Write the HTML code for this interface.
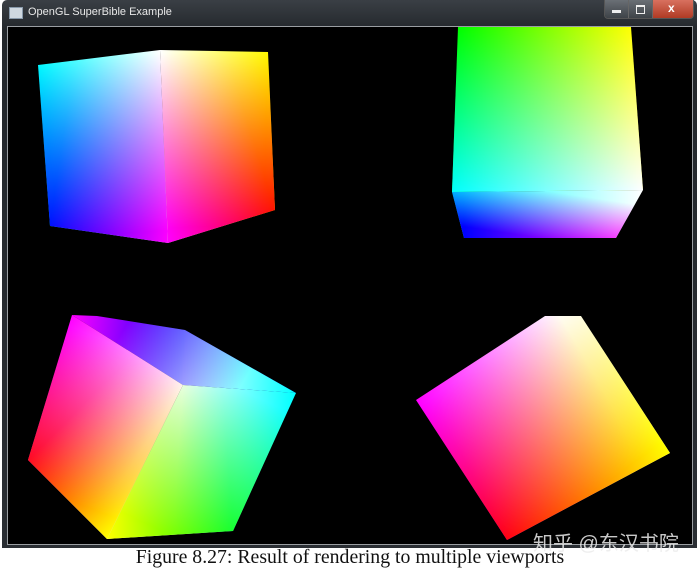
<!DOCTYPE html>
<html><head><meta charset="utf-8"><style>
html,body{margin:0;padding:0;background:#fff;width:700px;height:572px;overflow:hidden}
.win{position:absolute;left:2px;top:0;width:695px;height:548px;background:linear-gradient(#3a3f45,#23272b 30px,#2a2e33);border-radius:5px 5px 0 0}
.title{position:absolute;left:28px;top:6px;font:11px "Liberation Sans",sans-serif;color:#e8e8e8;}
.ico{position:absolute;left:9px;top:7px;width:12px;height:10px;background:#cfd8e0;border:1px solid #8899aa}
.canvas{position:absolute;left:8px;top:27px;width:684px;height:517px;background:#000;outline:1px solid #9a9ea2}
.btns{position:absolute;left:604px;top:0;height:18px;width:88px;border:1px solid #555;border-top:0;border-radius:0 0 4px 4px;overflow:hidden;display:flex}
.b{height:18px;background:linear-gradient(#6a6f75,#3e4348);border-right:1px solid #666;position:relative}
.b1{width:23px}.b2{width:23px}.b3{flex:1;background:linear-gradient(#d8705f,#b03a24);border:0}
.cap{position:absolute;left:0;width:700px;top:546px;text-align:center;font:19.8px "Liberation Serif",serif;color:#111}
.wm{position:absolute;left:533px;top:527px;font:20px "Liberation Sans","Noto Sans CJK SC",sans-serif;color:rgba(235,235,235,.85)}
svg{position:absolute;left:0;top:0}
</style></head><body>
<div class="win"></div>
<div class="ico"></div>
<div class="title">OpenGL SuperBible Example</div>
<div class="btns"><div class="b b1"><div style="position:absolute;left:7px;top:10px;width:9px;height:3px;background:#eee"></div></div><div class="b b2"><div style="position:absolute;left:7px;top:5px;width:7px;height:6px;border:1px solid #eee;border-top-width:2px"></div></div><div class="b b3"><div style="position:absolute;left:15px;top:1px;color:#fff;font:bold 12px 'Liberation Sans',sans-serif">x</div></div></div>
<div class="canvas"></div>
<svg width="700" height="572" viewBox="0 0 700 572">
<defs>
<linearGradient id="a1" gradientUnits="userSpaceOnUse" x1="38" y1="65" x2="160" y2="50"><stop offset="0" stop-color="#0ff"/><stop offset="1" stop-color="#fff"/></linearGradient>
<linearGradient id="b1" gradientUnits="userSpaceOnUse" x1="50" y1="226" x2="168" y2="243"><stop offset="0" stop-color="#00f"/><stop offset="1" stop-color="#f0f"/></linearGradient>
<linearGradient id="m1g" gradientUnits="userSpaceOnUse" x1="99" y1="57" x2="109" y2="234"><stop offset="0" stop-color="#000"/><stop offset="1" stop-color="#fff"/></linearGradient>
<mask id="m1"><rect width="700" height="572" fill="url(#m1g)"/></mask>
<linearGradient id="a2" gradientUnits="userSpaceOnUse" x1="160" y1="50" x2="268" y2="52"><stop offset="0" stop-color="#fff"/><stop offset="1" stop-color="#ff0"/></linearGradient>
<linearGradient id="b2" gradientUnits="userSpaceOnUse" x1="168" y1="243" x2="275" y2="210"><stop offset="0" stop-color="#f0f"/><stop offset="1" stop-color="#f00"/></linearGradient>
<linearGradient id="m2g" gradientUnits="userSpaceOnUse" x1="214" y1="51" x2="221" y2="226"><stop offset="0" stop-color="#000"/><stop offset="1" stop-color="#fff"/></linearGradient>
<mask id="m2"><rect width="700" height="572" fill="url(#m2g)"/></mask>
<linearGradient id="a3" gradientUnits="userSpaceOnUse" x1="458" y1="27" x2="631" y2="27"><stop offset="0" stop-color="#0f0"/><stop offset="1" stop-color="#ff0"/></linearGradient>
<linearGradient id="b3" gradientUnits="userSpaceOnUse" x1="452" y1="192" x2="643" y2="190"><stop offset="0" stop-color="#0ff"/><stop offset="1" stop-color="#fff"/></linearGradient>
<linearGradient id="m3g" gradientUnits="userSpaceOnUse" x1="544" y1="27" x2="547" y2="191"><stop offset="0" stop-color="#000"/><stop offset="1" stop-color="#fff"/></linearGradient>
<mask id="m3"><rect width="700" height="572" fill="url(#m3g)"/></mask>
<linearGradient id="b4" gradientUnits="userSpaceOnUse" x1="464" y1="238" x2="616" y2="238"><stop offset="0" stop-color="#00f"/><stop offset="1" stop-color="#f0f"/></linearGradient>
<linearGradient id="m4g" gradientUnits="userSpaceOnUse" x1="547" y1="191" x2="540" y2="238"><stop offset="0" stop-color="#000"/><stop offset="1" stop-color="#fff"/></linearGradient>
<mask id="m4"><rect width="700" height="572" fill="url(#m4g)"/></mask>
<linearGradient id="a5" gradientUnits="userSpaceOnUse" x1="72" y1="315" x2="185" y2="330"><stop offset="0" stop-color="#f0f"/><stop offset="1" stop-color="#00f"/></linearGradient>
<linearGradient id="b5" gradientUnits="userSpaceOnUse" x1="183" y1="385" x2="296" y2="393"><stop offset="0" stop-color="#fff"/><stop offset="1" stop-color="#0ff"/></linearGradient>
<linearGradient id="m5g" gradientUnits="userSpaceOnUse" x1="128" y1="322" x2="239" y2="389"><stop offset="0" stop-color="#000"/><stop offset="1" stop-color="#fff"/></linearGradient>
<mask id="m5"><rect width="700" height="572" fill="url(#m5g)"/></mask>
<linearGradient id="a6" gradientUnits="userSpaceOnUse" x1="72" y1="315" x2="183" y2="385"><stop offset="0" stop-color="#f0f"/><stop offset="1" stop-color="#fff"/></linearGradient>
<linearGradient id="b6" gradientUnits="userSpaceOnUse" x1="28" y1="460" x2="107" y2="539"><stop offset="0" stop-color="#f00"/><stop offset="1" stop-color="#ff0"/></linearGradient>
<linearGradient id="m6g" gradientUnits="userSpaceOnUse" x1="127" y1="350" x2="67" y2="499"><stop offset="0" stop-color="#000"/><stop offset="1" stop-color="#fff"/></linearGradient>
<mask id="m6"><rect width="700" height="572" fill="url(#m6g)"/></mask>
<linearGradient id="a7" gradientUnits="userSpaceOnUse" x1="183" y1="385" x2="296" y2="393"><stop offset="0" stop-color="#fff"/><stop offset="1" stop-color="#0ff"/></linearGradient>
<linearGradient id="b7" gradientUnits="userSpaceOnUse" x1="107" y1="539" x2="233" y2="531"><stop offset="0" stop-color="#ff0"/><stop offset="1" stop-color="#0f0"/></linearGradient>
<linearGradient id="m7g" gradientUnits="userSpaceOnUse" x1="239" y1="389" x2="170" y2="535"><stop offset="0" stop-color="#000"/><stop offset="1" stop-color="#fff"/></linearGradient>
<mask id="m7"><rect width="700" height="572" fill="url(#m7g)"/></mask>
<linearGradient id="a8" gradientUnits="userSpaceOnUse" x1="416" y1="400" x2="560" y2="316"><stop offset="0" stop-color="#f0f"/><stop offset="1" stop-color="#fff"/></linearGradient>
<linearGradient id="b8" gradientUnits="userSpaceOnUse" x1="507" y1="540" x2="670" y2="453"><stop offset="0" stop-color="#f00"/><stop offset="1" stop-color="#ff0"/></linearGradient>
<linearGradient id="m8g" gradientUnits="userSpaceOnUse" x1="488" y1="358" x2="588" y2="496"><stop offset="0" stop-color="#000"/><stop offset="1" stop-color="#fff"/></linearGradient>
<mask id="m8"><rect width="700" height="572" fill="url(#m8g)"/></mask>
</defs>
<g>
<polygon points="38,65 160,50 168,243 50,226" fill="url(#a1)"/>
<polygon points="38,65 160,50 168,243 50,226" fill="url(#b1)" mask="url(#m1)"/>
<polygon points="160,50 268,52 275,210 168,243" fill="url(#a2)"/>
<polygon points="160,50 268,52 275,210 168,243" fill="url(#b2)" mask="url(#m2)"/>
<polygon points="458,27 631,27 643,190 452,192" fill="url(#a3)"/>
<polygon points="458,27 631,27 643,190 452,192" fill="url(#b3)" mask="url(#m3)"/>
<polygon points="452,192 643,190 616,238 464,238" fill="url(#b3)"/>
<polygon points="452,192 643,190 616,238 464,238" fill="url(#b4)" mask="url(#m4)"/>
<polygon points="72,315 97,316 185,330 296,393 183,385" fill="url(#a5)"/>
<polygon points="72,315 97,316 185,330 296,393 183,385" fill="url(#b5)" mask="url(#m5)"/>
<polygon points="72,315 183,385 107,539 28,460" fill="url(#a6)"/>
<polygon points="72,315 183,385 107,539 28,460" fill="url(#b6)" mask="url(#m6)"/>
<polygon points="183,385 296,393 233,531 107,539" fill="url(#a7)"/>
<polygon points="183,385 296,393 233,531 107,539" fill="url(#b7)" mask="url(#m7)"/>
<polygon points="416,400 545,316 581,316 670,453 507,540" fill="url(#a8)"/>
<polygon points="416,400 545,316 581,316 670,453 507,540" fill="url(#b8)" mask="url(#m8)"/>
</g>
</svg>
<div class="wm">知乎 @东汉书院</div>
<div class="cap">Figure 8.27: Result of rendering to multiple viewports</div>
</body></html>
